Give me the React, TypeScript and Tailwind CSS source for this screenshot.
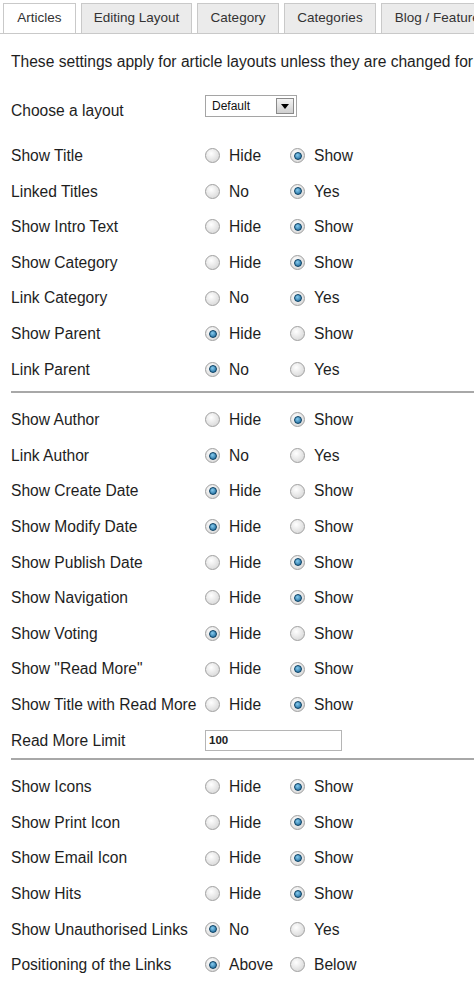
import React from "react";

type Opt = { a: string; b: string; sel: 0 | 1 };
type Row = { label: string; opt?: Opt; input?: string };

const groupOne: Row[] = [
  { label: "Show Title", opt: { a: "Hide", b: "Show", sel: 1 } },
  { label: "Linked Titles", opt: { a: "No", b: "Yes", sel: 1 } },
  { label: "Show Intro Text", opt: { a: "Hide", b: "Show", sel: 1 } },
  { label: "Show Category", opt: { a: "Hide", b: "Show", sel: 1 } },
  { label: "Link Category", opt: { a: "No", b: "Yes", sel: 1 } },
  { label: "Show Parent", opt: { a: "Hide", b: "Show", sel: 0 } },
  { label: "Link Parent", opt: { a: "No", b: "Yes", sel: 0 } },
];

const groupTwo: Row[] = [
  { label: "Show Author", opt: { a: "Hide", b: "Show", sel: 1 } },
  { label: "Link Author", opt: { a: "No", b: "Yes", sel: 0 } },
  { label: "Show Create Date", opt: { a: "Hide", b: "Show", sel: 0 } },
  { label: "Show Modify Date", opt: { a: "Hide", b: "Show", sel: 0 } },
  { label: "Show Publish Date", opt: { a: "Hide", b: "Show", sel: 1 } },
  { label: "Show Navigation", opt: { a: "Hide", b: "Show", sel: 1 } },
  { label: "Show Voting", opt: { a: "Hide", b: "Show", sel: 0 } },
  { label: 'Show "Read More"', opt: { a: "Hide", b: "Show", sel: 1 } },
  { label: "Show Title with Read More", opt: { a: "Hide", b: "Show", sel: 1 } },
  { label: "Read More Limit", input: "100" },
];

const groupThree: Row[] = [
  { label: "Show Icons", opt: { a: "Hide", b: "Show", sel: 1 } },
  { label: "Show Print Icon", opt: { a: "Hide", b: "Show", sel: 1 } },
  { label: "Show Email Icon", opt: { a: "Hide", b: "Show", sel: 1 } },
  { label: "Show Hits", opt: { a: "Hide", b: "Show", sel: 1 } },
  { label: "Show Unauthorised Links", opt: { a: "No", b: "Yes", sel: 0 } },
  { label: "Positioning of the Links", opt: { a: "Above", b: "Below", sel: 0 } },
];

const tabs = [
  { name: "Articles", w: "w-[73px]", active: true },
  { name: "Editing Layout", w: "w-[111px]" },
  { name: "Category", w: "w-[82px]" },
  { name: "Categories", w: "w-[92px]" },
  { name: "Blog / Featured", w: "w-[120px]" },
];

const Radio = ({ on }: { on: boolean }) => (
  <span className="w-[15px] h-[15px] rounded-full border border-[#a0a0a0] bg-[radial-gradient(circle_at_40%_35%,#ffffff,#d0d0d0)] flex items-center justify-center shrink-0">
    {on && (
      <span className="w-[8px] h-[8px] rounded-full border border-[#093f62] bg-[radial-gradient(circle_at_40%_35%,#86cbee,#135f93)]" />
    )}
  </span>
);

const SettingRow = ({ row }: { row: Row }) => (
  <div className="flex items-center h-[35.6px]">
    <span className="w-[194px] shrink-0 whitespace-nowrap">{row.label}</span>
    {row.opt && (
      <div className="flex items-center">
        <div className="flex items-center gap-[9px] w-[85px]">
          <Radio on={row.opt.sel === 0} />
          <span>{row.opt.a}</span>
        </div>
        <div className="flex items-center gap-[9px]">
          <Radio on={row.opt.sel === 1} />
          <span>{row.opt.b}</span>
        </div>
      </div>
    )}
    {row.input && (
      <div className="w-[137px] h-[21px] border border-[#b5b5b5] bg-white flex items-center pl-[3px] text-[11.5px] font-bold text-[#222]">
        {row.input}
      </div>
    )}
  </div>
);

export default function App() {
  return (
    <div className="w-[474px] h-[986px] overflow-hidden bg-white text-[#1e1e1e] text-[15.6px] font-['Liberation_Sans',Arial,sans-serif]">
      {/* tabs */}
      <div className="flex items-end gap-[5px] h-[34px] pl-[3px] border-b border-[#c9c9c9] whitespace-nowrap overflow-hidden">
        {tabs.map((t) => (
          <div
            key={t.name}
            className={`${t.w} shrink-0 h-[30px] flex items-center justify-center text-[13.5px] text-[#333] border border-[#c9c9c9] ${
              t.active ? "bg-white border-b-white -mb-px h-[31px]" : "bg-[#ebebeb] border-b-0"
            }`}
          >
            {t.name}
          </div>
        ))}
      </div>

      <div className="pl-[11px]">
        <p className="mt-[19px] leading-[18px] whitespace-nowrap">
          These settings apply for article layouts unless they are changed for
        </p>

        <div className="flex items-center h-[36px] mt-[22px]">
          <span className="w-[194px] shrink-0">Choose a layout</span>
          <div className="mb-[10px] w-[92px] h-[22px] border border-[#a5a5a5] bg-white flex items-center justify-between pl-[6px] pr-[2px]">
            <span className="text-[12px] text-[#111]">Default</span>
            <span className="w-[18px] h-[16px] border border-[#8a8a8a] bg-[linear-gradient(#f4f4f4,#cfcfcf)] flex items-center justify-center">
              <svg width="8" height="5" viewBox="0 0 8 5">
                <path d="M0 0h8L4 5z" fill="#000" />
              </svg>
            </span>
          </div>
        </div>

        <div className="mt-[9px]">
          {groupOne.map((r) => (
            <SettingRow key={r.label} row={r} />
          ))}
        </div>
        <div className="mt-[4px] h-[2px] bg-[#a8a8a8]" />

        <div className="mt-[9px]">
          {groupTwo.map((r) => (
            <SettingRow key={r.label} row={r} />
          ))}
        </div>
        <div className="h-[2px] bg-[#a8a8a8]" />

        <div className="mt-[9px]">
          {groupThree.map((r) => (
            <SettingRow key={r.label} row={r} />
          ))}
        </div>
      </div>
    </div>
  );
}
